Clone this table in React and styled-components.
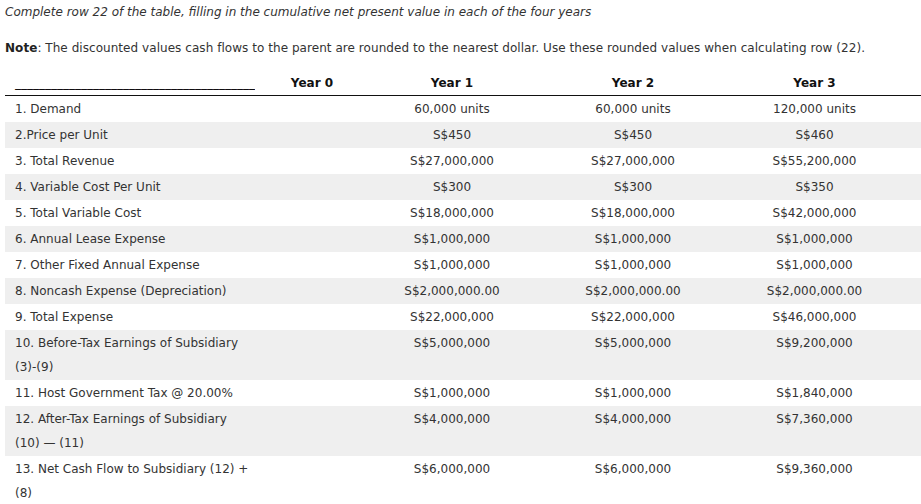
import React from 'react';
import styled, { createGlobalStyle } from 'styled-components';

const GlobalStyle = createGlobalStyle`
  html, body {
    margin: 0;
    padding: 0;
    background: #fff;
    overflow: hidden;
  }
  body {
    font-family: "DejaVu Sans", Verdana, sans-serif;
    font-size: 12px;
    color: #333;
  }
`;

// whole page
const Page = styled.div`
  padding: 5px 0 0 5px;
  width: 916px;
`;

const Intro = styled.p`
  margin: 0;
  font-style: italic;
  line-height: 15px;
  color: #333;
`;

const Note = styled.p`
  margin: 21px 0 0;
  line-height: 15px;
  color: #333;
  letter-spacing: 0.05px;

  b {
    color: #222;
  }
`;

const Table = styled.div`
  margin-top: 14px;
  width: 916px;
`;

const cols = '250px 114px 166px 196px 167px 23px';

// header row with underscore label and bold year titles
const HeadRow = styled.div`
  display: grid;
  grid-template-columns: ${cols};
  border-bottom: 1px solid #111;
  height: 25px;
  align-items: center;
`;

const HeadCell = styled.div`
  font-weight: bold;
  color: #111;
  text-align: ${p => (p.$left ? 'left' : 'center')};
  padding-left: ${p => (p.$left ? '10px' : '0')};
  white-space: nowrap;
  overflow: hidden;
`;

const Row = styled.div`
  display: grid;
  grid-template-columns: ${cols};
  background: ${p => (p.$alt ? '#efefef' : '#fff')};
  padding: 1px 0;
  line-height: 24px;
`;

const Label = styled.div`
  padding-left: 10px;
  padding-right: 6px;
`;

const Value = styled.div`
  text-align: center;
  white-space: nowrap;
`;

const rows = [
  { label: '1. Demand', v: ['', '60,000 units', '60,000 units', '120,000 units'] },
  { label: '2.Price per Unit', v: ['', 'S$450', 'S$450', 'S$460'] },
  { label: '3. Total Revenue', v: ['', 'S$27,000,000', 'S$27,000,000', 'S$55,200,000'] },
  { label: '4. Variable Cost Per Unit', v: ['', 'S$300', 'S$300', 'S$350'] },
  { label: '5. Total Variable Cost', v: ['', 'S$18,000,000', 'S$18,000,000', 'S$42,000,000'] },
  { label: '6. Annual Lease Expense', v: ['', 'S$1,000,000', 'S$1,000,000', 'S$1,000,000'] },
  { label: '7. Other Fixed Annual Expense', v: ['', 'S$1,000,000', 'S$1,000,000', 'S$1,000,000'] },
  { label: '8. Noncash Expense (Depreciation)', v: ['', 'S$2,000,000.00', 'S$2,000,000.00', 'S$2,000,000.00'] },
  { label: '9. Total Expense', v: ['', 'S$22,000,000', 'S$22,000,000', 'S$46,000,000'] },
  { label: ['10. Before-Tax Earnings of Subsidiary', '(3)-(9)'], v: ['', 'S$5,000,000', 'S$5,000,000', 'S$9,200,000'] },
  { label: '11. Host Government Tax @ 20.00%', v: ['', 'S$1,000,000', 'S$1,000,000', 'S$1,840,000'] },
  { label: ['12. After-Tax Earnings of Subsidiary', '(10) \u2014 (11)'], v: ['', 'S$4,000,000', 'S$4,000,000', 'S$7,360,000'] },
  { label: ['13. Net Cash Flow to Subsidiary (12) +', '(8)'], v: ['', 'S$6,000,000', 'S$6,000,000', 'S$9,360,000'] },
];

const App = () => {
  return (
    <Page>
      <GlobalStyle />
      <Intro>Complete row 22 of the table, filling in the cumulative net present value in each of the four years</Intro>
      <Note>
        <b>Note</b>: The discounted values cash flows to the parent are rounded to the nearest dollar. Use these rounded values when calculating row (22).
      </Note>
      <Table>
        <HeadRow>
          <HeadCell $left>{'_'.repeat(40)}</HeadCell>
          <HeadCell>Year 0</HeadCell>
          <HeadCell>Year 1</HeadCell>
          <HeadCell>Year 2</HeadCell>
          <HeadCell>Year 3</HeadCell>
          <HeadCell />
        </HeadRow>
        {rows.map((r, i) => (
          <Row key={i} $alt={i % 2 === 1}>
            <Label>
              {Array.isArray(r.label)
                ? r.label.map((l, j) => <div key={j}>{l}</div>)
                : r.label}
            </Label>
            {r.v.map((v, j) => (
              <Value key={j}>{v}</Value>
            ))}
            <Value />
          </Row>
        ))}
      </Table>
    </Page>
  );
};

export default App;
